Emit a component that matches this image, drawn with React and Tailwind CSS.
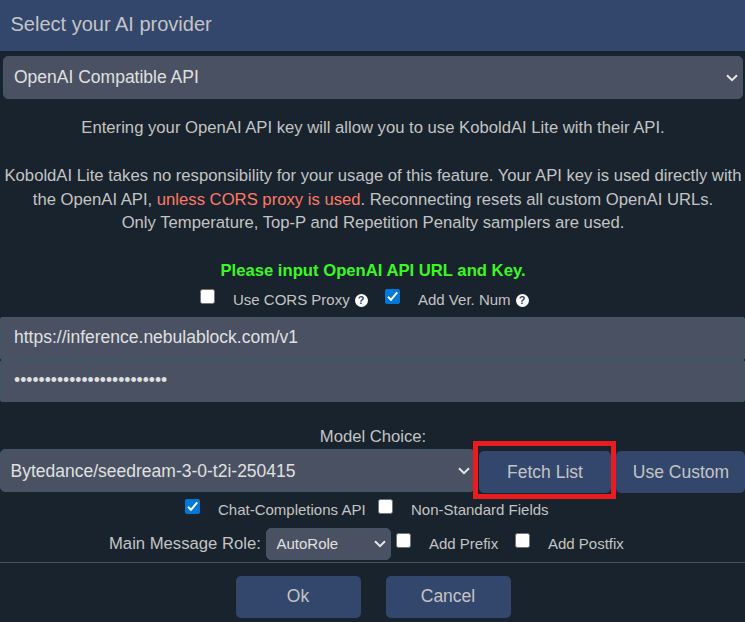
function Chevron({ className = "" }) {
  return (
    <svg
      viewBox="0 0 12 8"
      fill="none"
      stroke="#e6e6e6"
      strokeWidth="2"
      className={`h-2 w-3 shrink-0 ${className}`}
    >
      <path d="M1 1.2 6 6.2 11 1.2" />
    </svg>
  );
}

function Checkbox({ checked, className = "" }) {
  if (!checked) {
    return (
      <span
        role="checkbox"
        aria-checked="false"
        className={`size-[15px] shrink-0 rounded-[2.5px] border border-[#767676] bg-white ${className}`}
      />
    );
  }
  return (
    <span
      role="checkbox"
      aria-checked="true"
      className={`size-[15px] shrink-0 rounded-[2px] bg-[#0078d7] ${className}`}
    >
      <svg viewBox="0 0 15 15" fill="none" stroke="#fff" strokeWidth="2.1" className="size-[15px]">
        <path d="M3 7.8 6 10.8 12.2 3.4" />
      </svg>
    </span>
  );
}

function Help() {
  return (
    <span className="mt-[2px] ml-[5px] flex size-[13px] shrink-0 items-center justify-center rounded-full bg-white text-[11px] leading-none font-bold text-[#2c4a6b]">
      ?
    </span>
  );
}

export default function App() {
  return (
    <div className="flex h-[622px] w-[745px] flex-col overflow-hidden bg-[#18232d] font-['Liberation_Sans',Arial,sans-serif] text-[16.67px] text-[#c4c4c4]">
      <header className="flex h-[51px] shrink-0 items-center bg-[#33476d] pb-[3px] pl-[10.5px] text-[20px]">
        Select your AI provider
      </header>

      <div className="mt-[5px] mr-[2px] ml-[3px] flex h-[43px] shrink-0 items-center justify-between rounded-[5px] border border-[#415864] bg-[#495162] pr-[4px] pl-[10px] text-[17.5px] text-[#e0e0e0]">
        <span className="whitespace-nowrap">OpenAI Compatible API</span>
        <Chevron />
      </div>

      <div className="mt-[17px] h-[166px] shrink-0 pl-px text-center leading-[24px] whitespace-nowrap">
        <p>Entering your OpenAI API key will allow you to use KoboldAI Lite with their API.</p>
        <p className="mt-[24px] flex justify-center">
          KoboldAI Lite takes no responsibility for your usage of this feature. Your API key is used directly with
        </p>
        <p>
          the OpenAI API, <span className="text-[#ff7967]">unless CORS proxy is used</span>. Reconnecting resets all
          custom OpenAI URLs.
        </p>
        <p className="-mt-px">Only Temperature, Top-P and Repetition Penalty samplers are used.</p>
        <p className="mt-[24px] font-bold text-[#3bf723]">Please input OpenAI API URL and Key.</p>
      </div>

      <div className="flex h-[35px] shrink-0 items-start pt-[7px] pl-[200px] text-[15px] leading-[21px] whitespace-nowrap">
        <Checkbox />
        <span className="ml-[18px] flex w-[136px] items-center">
          Use CORS Proxy
          <Help />
        </span>
        <Checkbox checked className="ml-[16px]" />
        <span className="ml-[18px] flex items-center">
          Add Ver. Num
          <Help />
        </span>
      </div>

      <div className="flex h-[43px] shrink-0 items-center rounded-[2px] border border-[#415864] bg-[#495162] pb-[3px] pl-[13px] text-[17.5px] text-[#e0e0e0]">
        https://inference.nebulablock.com/v1
      </div>
      <div className="flex h-[42px] shrink-0 items-center rounded-[2px] border border-[#415864] bg-[#495162] pb-[1px] pl-[13px] text-[17.5px] text-[#e0e0e0]">
        •••••••••••••••••••••••••
      </div>

      <div className="mt-[23px] h-[24px] shrink-0 pl-px text-center leading-[24px]">Model Choice:</div>

      <div className="flex h-[45px] shrink-0 text-[17.5px]">
        <div className="flex h-[43px] w-[475px] items-center justify-between rounded-[5px] border border-[#415864] bg-[#495162] pr-[4px] pl-[9.5px] text-[#e0e0e0]">
          <span className="mt-px">Bytedance/seedream-3-0-t2i-250415</span>
          <Chevron />
        </div>
        <div className="relative mt-[2px] ml-[4px] h-[42px] w-[132px]">
          <button className="size-full rounded-[5px] bg-[#33476d]">Fetch List</button>
          <span className="pointer-events-none absolute -top-[10px] -left-[6px] h-[58px] w-[143px] border-[5px] border-[#e91c1e]" />
        </div>
        <button className="mt-[2px] ml-[5px] h-[42px] w-[129px] rounded-[5px] bg-[#33476d] pl-px whitespace-nowrap">
          Use Custom
        </button>
      </div>

      <div className="flex h-[34px] shrink-0 items-start pt-[5px] pl-[185px] text-[15px] leading-[21px] whitespace-nowrap">
        <Checkbox checked />
        <span className="ml-[18px] w-[148px]">Chat-Completions API</span>
        <Checkbox className="ml-[12px]" />
        <span className="ml-[18px]">Non-Standard Fields</span>
      </div>

      <div className="flex h-[35px] shrink-0 items-start border-b border-[#415864] pl-[109px] text-[15px] leading-[21px] whitespace-nowrap">
        <span className="mt-[4px] w-[157px] text-[16.67px] leading-[24px]">Main Message Role:</span>
        <div className="flex h-[32px] w-[125px] items-center justify-between rounded-[5px] border border-[#415864] bg-[#495162] pr-[4px] pb-px pl-[9.5px] text-[#e0e0e0]">
          AutoRole
          <Chevron className="mt-px" />
        </div>
        <Checkbox className="mt-[5px] ml-[5px]" />
        <span className="mt-[5px] ml-[18px] w-[70px]">Add Prefix</span>
        <Checkbox className="mt-[5px] ml-[16px]" />
        <span className="mt-[5px] ml-[18px]">Add Postfix</span>
      </div>

      <div className="mt-[13px] flex justify-center gap-[25px] pl-[2px] text-[17.5px]">
        <button className="h-[42px] w-[125px] rounded-[5px] bg-[#33476d] pr-px pb-[2px]">Ok</button>
        <button className="h-[42px] w-[125px] rounded-[5px] bg-[#33476d] pr-px pb-[2px]">Cancel</button>
      </div>
    </div>
  );
}
